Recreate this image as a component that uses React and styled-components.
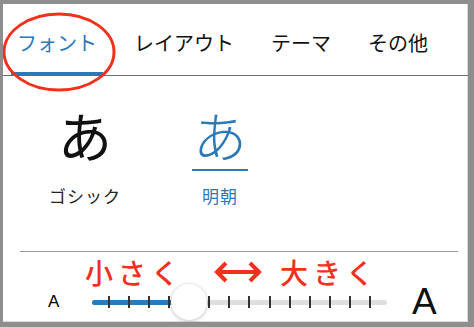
import React from 'react';
import styled, { createGlobalStyle } from 'styled-components';

const GlobalStyle = createGlobalStyle`
  html, body {
    margin: 0;
    padding: 0;
    background: #8e8e8e;
  }
  body {
    font-family: "Noto Sans CJK JP", "Noto Sans", sans-serif;
  }
`;

const BLUE = '#2b79b6';
const RED = '#f2311c';

const tabs = ['フォント', 'レイアウト', 'テーマ', 'その他'];
const fonts = [
  { label: 'ゴシック', weight: 400 },
  { label: '明朝', weight: 300 },
];
const TICKS = 14;

function App() {
  const active = 0;
  const selected = 1;
  const level = 0.33; // thumb position along track

  return (
    <>
      <GlobalStyle />
      <Frame>
        <Panel>
          <TabBar>
            {tabs.map((t, i) => (
              <Tab key={t} active={i === active}>{t}</Tab>
            ))}
          </TabBar>

          <Options>
            {fonts.map((f, i) => (
              <Option key={f.label}>
                <Glyph weight={f.weight} active={i === selected}>あ</Glyph>
                <Underline active={i === selected} />
                <OptionLabel active={i === selected}>{f.label}</OptionLabel>
              </Option>
            ))}
          </Options>

          <Divider />

          <Annotation>
            <Words>小さく</Words>
            <Arrow viewBox="0 0 50 24" width="50" height="24">
              <path
                d="M4 12 H46 M13 3 L4 12 L13 21 M37 3 L46 12 L37 21"
                fill="none"
                stroke={RED}
                strokeWidth="4"
                strokeLinejoin="miter"
              />
            </Arrow>
            <Words gap={17}>大きく</Words>
          </Annotation>

          <SliderRow>
            <SmallA>A</SmallA>
            <Track>
              <Fill style={{ width: `${level * 100}%` }} />
              <Ticks>
                {Array.from({ length: TICKS }).map((_, i) => (
                  <Tick key={i} />
                ))}
              </Ticks>
              <Thumb style={{ left: `${level * 100}%` }} />
            </Track>
            <BigA>A</BigA>
          </SliderRow>

          <Circle viewBox="0 0 120 84" width="120" height="84">
            <ellipse cx="58" cy="42" rx="55" ry="38" fill="none" stroke={RED} strokeWidth="3" />
          </Circle>
        </Panel>
      </Frame>
    </>
  );
}

export default App;

const Frame = styled.div`
  width: 474px;
  height: 327px;
  box-sizing: border-box;
  padding: 4px 6px 5px 3px;
  background: #8e8e8e;
`;

const Panel = styled.div`
  position: relative;
  height: 100%;
  background: #fff;
  overflow: hidden;
  box-shadow: inset -1px -1px 0 #dcdcdc;
`;

const TabBar = styled.div`
  display: flex;
  align-items: flex-start;
  gap: 25px;
  height: 71px;
  padding-left: 8px;
  border-bottom: 1px solid #6f6f6f;
`;

const Tab = styled.div`
  box-sizing: border-box;
  height: 72px;
  padding: 8px 6px 0;
  display: flex;
  align-items: center;
  font-size: 20px;
  color: ${p => (p.active ? BLUE : '#111')};
  border-bottom: 4px solid ${p => (p.active ? BLUE : 'transparent')};
`;

const Options = styled.div`
  display: flex;
  gap: 25px;
  padding: 28px 0 0 27px;
`;

const Option = styled.div`
  width: 110px;
  display: flex;
  flex-direction: column;
  align-items: center;
`;

const Glyph = styled.div`
  font-size: 54px;
  line-height: 62px;
  font-weight: ${p => p.weight};
  color: ${p => (p.active ? BLUE : '#111')};
`;

const Underline = styled.div`
  width: 56px;
  height: 2px;
  margin-top: 3px;
  background: ${p => (p.active ? BLUE : 'transparent')};
`;

const OptionLabel = styled.div`
  margin-top: 13px;
  font-size: 17px;
  line-height: 24px;
  letter-spacing: 1px;
  color: ${p => (p.active ? BLUE : '#222')};
`;

const Divider = styled.div`
  height: 1px;
  background: #9a9a9a;
  margin: 43px 10px 0 17px;
`;

const Annotation = styled.div`
  display: flex;
  align-items: center;
  height: 32px;
  margin: 4px 0 0 82px;
  color: ${RED};
`;

const Words = styled.span`
  margin-left: ${p => p.gap || 0}px;
  font-size: 28px;
  line-height: 32px;
  font-weight: 500;
  letter-spacing: 5px;
`;

const Arrow = styled.svg`
  margin-left: 29px;
  flex-shrink: 0;
`;

const SliderRow = styled.div`
  display: flex;
  align-items: center;
  height: 30px;
  margin-top: -1px;
`;

const SmallA = styled.div`
  width: 89px;
  box-sizing: border-box;
  padding-left: 45px;
  font-family: "Liberation Sans", Arial, sans-serif;
  font-size: 17px;
`;

const Track = styled.div`
  position: relative;
  width: 295px;
  height: 5px;
  border-radius: 3px;
  background: #dedede;
`;

const Fill = styled.div`
  height: 100%;
  border-radius: 3px;
  background: ${BLUE};
`;

const Ticks = styled.div`
  position: absolute;
  left: 16px;
  right: 16px;
  top: -4px;
  display: flex;
  justify-content: space-between;
`;

const Tick = styled.div`
  width: 2px;
  height: 12px;
  background: #333;
`;

const Thumb = styled.div`
  position: absolute;
  top: 50%;
  width: 36px;
  height: 36px;
  border-radius: 50%;
  background: #fff;
  transform: translate(-50%, -50%);
  box-shadow: 0 1px 4px rgba(0, 0, 0, 0.22), 0 0 1px rgba(0, 0, 0, 0.15);
`;

const BigA = styled.div`
  margin-left: 25px;
  font-family: "Liberation Sans", Arial, sans-serif;
  font-size: 37px;
  line-height: 30px;
  color: #111;
`;

const Circle = styled.svg`
  position: absolute;
  left: -2px;
  top: 6px;
  pointer-events: none;
`;
